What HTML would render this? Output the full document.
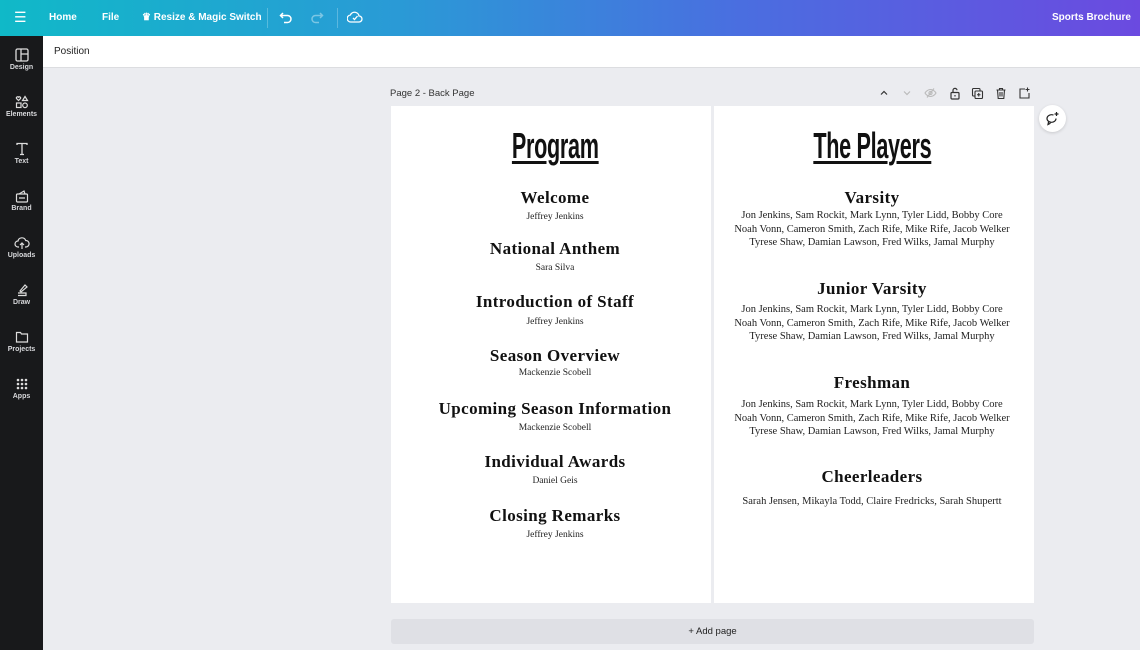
<!DOCTYPE html>
<html><head><meta charset="utf-8"><style>
*{margin:0;padding:0;box-sizing:border-box}
body{width:1140px;height:650px;overflow:hidden;background:#ebecf0;font-family:"Liberation Sans",sans-serif;position:relative}
.top{position:absolute;left:0;top:0;width:1140px;height:36px;background:linear-gradient(90deg,#10b9c8 0%,#2a9ad6 35%,#4a6ee0 65%,#6b4ae0 100%);color:#fff;font-weight:bold;font-size:10px}
.top span{position:absolute;top:12px}
.side{position:absolute;left:0;top:36px;width:43px;height:614px;background:#18191b}
.si{position:absolute;left:0;width:43px;text-align:center;color:#d8d9dc;font-size:7px;font-weight:bold}
.si svg{display:block;margin:0 auto 2px}
.pos{position:absolute;left:43px;top:36px;width:1097px;height:32px;background:#fff;border-bottom:1px solid #dcdde0;font-size:10px;color:#222}
.page{position:absolute;top:106px;width:320px;height:497px;background:#fff}
.t{position:absolute;left:0;width:100%;text-align:center;font-family:"Liberation Serif",serif;color:#111;white-space:nowrap}
.h{font-size:17px;font-weight:bold;letter-spacing:0.4px;line-height:20px}
.s{font-size:9.5px;line-height:12px;color:#222}
.n{font-size:10.5px;line-height:13.5px;color:#222}
.ti{position:absolute;left:0;width:100%;text-align:center;top:20px;line-height:40px}
.ti span{display:inline-block;font-family:"Liberation Sans",sans-serif;font-weight:bold;font-size:36px;transform:scaleX(0.6);text-decoration:underline;text-decoration-thickness:3px;text-underline-offset:3px;color:#111;letter-spacing:-0.5px}
.ic{position:absolute;top:87px}
.inner{position:absolute;top:0;width:320px;height:497px}
</style></head><body>
<div class="top">
<span style="left:14px;font-size:14px;top:9px;font-weight:normal">☰</span>
<span style="left:49px">Home</span>
<span style="left:102px">File</span>
<span style="left:142px">♛ Resize &amp; Magic Switch</span>
<div style="position:absolute;left:267px;top:8px;width:1px;height:20px;background:rgba(255,255,255,.25)"></div>
<svg style="position:absolute;left:279px;top:10px" width="14" height="14" viewBox="0 0 14 14" fill="none" stroke="#fff" stroke-width="1.5"><path d="M4 3L1.5 5.5 4 8M2 5.5h6.5a3.5 3.5 0 010 7H5"/></svg>
<svg style="position:absolute;left:310px;top:10px" width="14" height="14" viewBox="0 0 14 14" fill="none" stroke="rgba(255,255,255,.4)" stroke-width="1.5"><path d="M10 3l2.5 2.5L10 8M12 5.5H5.5a3.5 3.5 0 000 7H9"/></svg>
<div style="position:absolute;left:337px;top:8px;width:1px;height:20px;background:rgba(255,255,255,.25)"></div>
<svg style="position:absolute;left:347px;top:10px" width="16" height="14" viewBox="0 0 16 14" fill="none" stroke="#fff" stroke-width="1.3"><path d="M4 12h8a3 3 0 000-6 4.5 4.5 0 00-8.6-1A3.5 3.5 0 004 12z"/><path d="M6 8l1.5 1.5L10.5 6"/></svg>
<span style="left:1052px">Sports Brochure</span>
</div>
<div class="side">
<div class="si" style="top:12px"><svg width="14" height="14" viewBox="0 0 14 14" fill="none" stroke="#ddd" stroke-width="1.3"><rect x="1" y="1" width="12" height="12" rx="1.5"/><path d="M6 1v12M6 6h7"/></svg>Design</div>
<div class="si" style="top:59px"><svg width="14" height="14" viewBox="0 0 14 14" fill="none" stroke="#ddd" stroke-width="1.2"><path d="M3.5 5.5L1.5 3.5a1.2 1.2 0 012-1.3 1.2 1.2 0 012 1.3z"/><path d="M10 1.5l2.5 4h-5z"/><rect x="1.5" y="8" width="4.5" height="4.5"/><circle cx="10" cy="10.3" r="2.3"/></svg>Elements</div>
<div class="si" style="top:106px"><svg width="14" height="14" viewBox="0 0 14 14" fill="none" stroke="#ddd" stroke-width="1.3"><path d="M2 3V1.5h10V3M7 1.5v11M5 12.5h4"/></svg>Text</div>
<div class="si" style="top:153px"><svg width="14" height="14" viewBox="0 0 14 14" fill="none" stroke="#ddd" stroke-width="1.2"><rect x="1.5" y="5" width="11" height="8" rx="1"/><path d="M4 5l5-3 1 3M4 9h6"/></svg>Brand</div>
<div class="si" style="top:200px"><svg width="16" height="14" viewBox="0 0 16 14" fill="none" stroke="#ddd" stroke-width="1.2"><path d="M5 11H4a3 3 0 010-6 4 4 0 017.7-.5A3 3 0 0112 11h-1M8 13V7M6 9l2-2 2 2"/></svg>Uploads</div>
<div class="si" style="top:247px"><svg width="14" height="14" viewBox="0 0 14 14" fill="none" stroke="#ddd" stroke-width="1.2"><path d="M5 8l5-6 2 2-6 5zM3 10h8v2.5H3"/></svg>Draw</div>
<div class="si" style="top:294px"><svg width="14" height="14" viewBox="0 0 14 14" fill="none" stroke="#ddd" stroke-width="1.2"><path d="M1.5 2.5h4l1 1.5h6v8h-11z"/></svg>Projects</div>
<div class="si" style="top:341px"><svg width="14" height="14" viewBox="0 0 14 14" fill="#ddd"><circle cx="3" cy="3" r="1.3"/><circle cx="7" cy="3" r="1.3"/><circle cx="11" cy="3" r="1.3"/><circle cx="3" cy="7" r="1.3"/><circle cx="7" cy="7" r="1.3"/><circle cx="11" cy="7" r="1.3"/><circle cx="3" cy="11" r="1.3"/><circle cx="7" cy="11" r="1.3"/><circle cx="11" cy="11" r="1.3"/></svg>Apps</div>
</div>
<div class="pos"><span style="position:absolute;left:11px;top:10px">Position</span></div>
<div style="position:absolute;left:390px;top:88px;font-size:9.5px;color:#333">Page 2 - Back Page</div>
<svg class="ic" style="left:878px" width="12" height="12" viewBox="0 0 12 12" fill="none" stroke="#333" stroke-width="1.2"><path d="M3 7.5l3-3 3 3"/></svg>
<svg class="ic" style="left:901px" width="12" height="12" viewBox="0 0 12 12" fill="none" stroke="#bbb" stroke-width="1.2"><path d="M3 4.5l3 3 3-3"/></svg>
<svg class="ic" style="left:924px" width="13" height="12" viewBox="0 0 13 12" fill="none" stroke="#bbb" stroke-width="1.1"><path d="M1 6s2-3.5 5.5-3.5S12 6 12 6s-2 3.5-5.5 3.5S1 6 1 6z"/><circle cx="6.5" cy="6" r="1.6"/><path d="M3 10.5L10 1.5"/></svg>
<svg class="ic" style="left:949px" width="12" height="13" viewBox="0 0 12 13" fill="none" stroke="#333" stroke-width="1.2"><rect x="2" y="5.5" width="8" height="6.5" rx="1"/><path d="M4 5.5V3.5a2 2 0 014-.3"/><path d="M6 8v1.5"/></svg>
<svg class="ic" style="left:971px" width="13" height="13" viewBox="0 0 13 13" fill="none" stroke="#333" stroke-width="1.1"><rect x="1.5" y="1.5" width="7.5" height="7.5" rx="1"/><rect x="4" y="4" width="7.5" height="7.5" rx="1" fill="#ebecf0"/><path d="M7.75 6v3.5M6 7.75h3.5"/></svg>
<svg class="ic" style="left:995px" width="12" height="13" viewBox="0 0 12 13" fill="none" stroke="#333" stroke-width="1.1"><path d="M1.5 3h9M4.5 3V1.5h3V3M2.5 3l.7 8.5h5.6L9.5 3M5 5v4.5M7 5v4.5"/></svg>
<svg class="ic" style="left:1018px" width="13" height="13" viewBox="0 0 13 13" fill="none" stroke="#333" stroke-width="1.1"><path d="M7 2H2v9h9V6M9.5 0.5v4M7.5 2.5h4"/></svg>
<div style="position:absolute;left:1039px;top:105px;width:27px;height:27px;border-radius:50%;background:#fff;box-shadow:0 1px 3px rgba(0,0,0,.15)"><svg style="position:absolute;left:6px;top:6px" width="15" height="15" viewBox="0 0 15 15" fill="none" stroke="#222" stroke-width="1.2"><path d="M11 7.5a4.5 3.8 0 11-2.5-3.4M3.5 11l-.5 2.5 2.5-1.3"/><path d="M11.5 1v4M9.5 3h4"/></svg></div>

<div class="page" style="left:391px"><div class="inner" style="left:4px">
<div class="ti"><span>Program</span></div>
<div class="t h" style="top:82px">Welcome</div>
<div class="t s" style="top:105px">Jeffrey Jenkins</div>
<div class="t h" style="top:133px">National Anthem</div>
<div class="t s" style="top:156px">Sara Silva</div>
<div class="t h" style="top:186px">Introduction of Staff</div>
<div class="t s" style="top:210px">Jeffrey Jenkins</div>
<div class="t h" style="top:240px">Season Overview</div>
<div class="t s" style="top:261px">Mackenzie Scobell</div>
<div class="t h" style="top:293px">Upcoming Season Information</div>
<div class="t s" style="top:316px">Mackenzie Scobell</div>
<div class="t h" style="top:346px">Individual Awards</div>
<div class="t s" style="top:369px">Daniel Geis</div>
<div class="t h" style="top:400px">Closing Remarks</div>
<div class="t s" style="top:423px">Jeffrey Jenkins</div>
</div></div>
<div class="page" style="left:714px"><div class="inner" style="left:-2px">
<div class="ti"><span>The Players</span></div>
<div class="t h" style="top:82px">Varsity</div>
<div class="t n" style="top:103px">Jon Jenkins, Sam Rockit, Mark Lynn, Tyler Lidd, Bobby Core<br>Noah Vonn, Cameron Smith, Zach Rife, Mike Rife, Jacob Welker<br>Tyrese Shaw, Damian Lawson, Fred Wilks, Jamal Murphy</div>
<div class="t h" style="top:173px">Junior Varsity</div>
<div class="t n" style="top:197px">Jon Jenkins, Sam Rockit, Mark Lynn, Tyler Lidd, Bobby Core<br>Noah Vonn, Cameron Smith, Zach Rife, Mike Rife, Jacob Welker<br>Tyrese Shaw, Damian Lawson, Fred Wilks, Jamal Murphy</div>
<div class="t h" style="top:267px">Freshman</div>
<div class="t n" style="top:292px">Jon Jenkins, Sam Rockit, Mark Lynn, Tyler Lidd, Bobby Core<br>Noah Vonn, Cameron Smith, Zach Rife, Mike Rife, Jacob Welker<br>Tyrese Shaw, Damian Lawson, Fred Wilks, Jamal Murphy</div>
<div class="t h" style="top:361px">Cheerleaders</div>
<div class="t n" style="top:389px">Sarah Jensen, Mikayla Todd, Claire Fredricks, Sarah Shupertt</div>
</div></div>
<div style="position:absolute;left:391px;top:619px;width:643px;height:25px;background:#dfe0e5;border-radius:3px;text-align:center;font-size:9.5px;line-height:25px;color:#222">+ Add page</div>
</body></html>
